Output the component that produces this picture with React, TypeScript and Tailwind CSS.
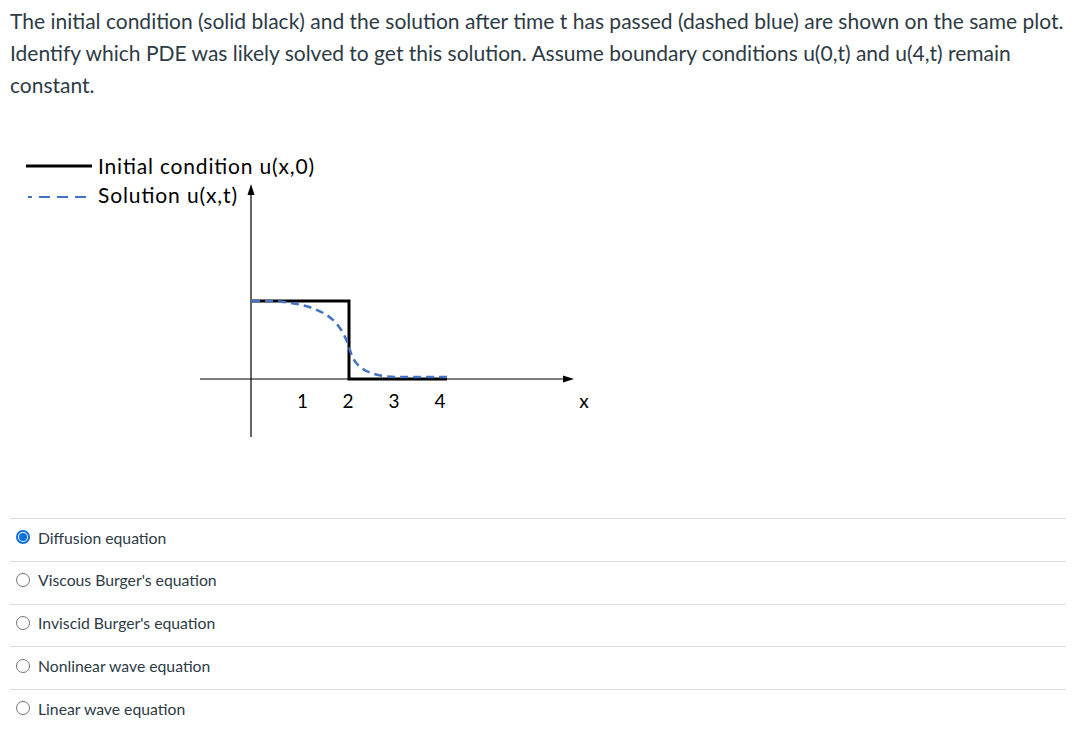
const options = [
  { label: "Diffusion equation", checked: true },
  { label: "Viscous Burger's equation", checked: false },
  { label: "Inviscid Burger's equation", checked: false },
  { label: "Nonlinear wave equation", checked: false },
  { label: "Linear wave equation", checked: false },
];

function Plot() {
  return (
    <svg
      width="600"
      height="320"
      viewBox="10 140 600 320"
      className="block"
      style={{ fontFamily: "Lato, 'Open Sans', sans-serif" }}
    >
      {/* legend */}
      <line x1="26" y1="166" x2="92" y2="166" stroke="#000" strokeWidth="3" />
      <text x="98" y="174" fontSize="21" fill="#000" textLength="216">
        Initial condition u(x,0)
      </text>
      <line
        x1="28"
        y1="197"
        x2="90"
        y2="197"
        stroke="#4472c4"
        strokeWidth="2"
        strokeDasharray="11 7"
        strokeDashoffset="7"
      />
      <text x="98" y="203" fontSize="21" fill="#000" textLength="139">
        Solution u(x,t)
      </text>

      {/* axes */}
      <line x1="251" y1="194" x2="251" y2="437" stroke="#000" strokeWidth="1.2" />
      <polygon points="251,184 247.5,195 254.5,195" fill="#000" />
      <line x1="200" y1="379" x2="564" y2="379" stroke="#000" strokeWidth="1.2" />
      <polygon points="574,379 563,375.5 563,382.5" fill="#000" />

      {/* initial condition */}
      <polyline
        points="252,301 349,301 349,379 447,379"
        fill="none"
        stroke="#000"
        strokeWidth="3"
      />

      {/* solution */}
      <path
        d="M252 301 C 290 300, 320 306, 335 322 C 346 334, 348 345, 352 356 C 358 370, 372 376, 395 377 L 447 377"
        fill="none"
        stroke="#4472c4"
        strokeWidth="2.5"
        strokeDasharray="8 5"
      />

      {/* tick labels */}
      <g fontSize="19" fill="#000" textAnchor="middle">
        <text x="302.5" y="408">1</text>
        <text x="348" y="408">2</text>
        <text x="394" y="408">3</text>
        <text x="440" y="408">4</text>
        <text x="584" y="408">x</text>
      </g>
    </svg>
  );
}

function Radio({ checked }: { checked: boolean }) {
  if (checked) {
    return (
      <span className="flex h-[14px] w-[14px] shrink-0 items-center justify-center rounded-full border-2 border-[#0b6fe0] bg-white">
        <span className="h-[8px] w-[8px] rounded-full bg-[#0b6fe0]" />
      </span>
    );
  }
  return <span className="h-[14px] w-[14px] shrink-0 rounded-full border border-[#767676] bg-white" />;
}

export default function App() {
  return (
    <div
      className="min-h-[748px] bg-white pl-[10px] pr-[8px] pt-[5px] text-[#2d3b45]"
      style={{ fontFamily: "Lato, 'Open Sans', sans-serif" }}
    >
      <p className="text-[21px] leading-[32px]">
        The initial condition (solid black) and the solution after time t has passed (dashed blue) are shown on the same plot.
        Identify which PDE was likely solved to get this solution. Assume boundary conditions u(0,t) and u(4,t) remain
        constant.
      </p>

      <div className="mt-[39px]">
        <Plot />
      </div>

      <div className="mt-[58px]">
        {options.map((o) => (
          <div
            key={o.label}
            className="flex h-[42.75px] items-center gap-[8px] border-t border-[#dddddd] pb-[5px] pl-[6px] text-[15.75px]"
          >
            <Radio checked={o.checked} />
            <span>{o.label}</span>
          </div>
        ))}
      </div>
    </div>
  );
}
